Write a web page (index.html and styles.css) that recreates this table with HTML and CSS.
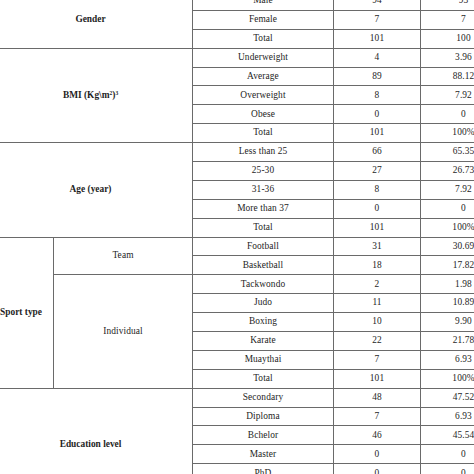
FILE: index.html
```html
<!DOCTYPE html>
<html>
<head>
<meta charset="utf-8">
<link rel="stylesheet" href="styles.css">
</head>
<body>
<table class="data">
  <colgroup>
    <col class="c-a"><col class="c-b"><col class="c-1"><col class="c-2"><col class="c-3">
  </colgroup>
  <tbody>
    <tr><td class="lab" colspan="2" rowspan="3">Gender</td><td>Male</td><td>94</td><td>93</td></tr>
    <tr><td>Female</td><td>7</td><td>7</td></tr>
    <tr><td>Total</td><td>101</td><td>100</td></tr>

    <tr><td class="lab" colspan="2" rowspan="5">BMI (Kg\m<sup>2</sup>)<sup>3</sup></td><td>Underweight</td><td>4</td><td>3.96</td></tr>
    <tr><td>Average</td><td>89</td><td>88.12</td></tr>
    <tr><td>Overweight</td><td>8</td><td>7.92</td></tr>
    <tr><td>Obese</td><td>0</td><td>0</td></tr>
    <tr><td>Total</td><td>101</td><td>100%</td></tr>

    <tr><td class="lab" colspan="2" rowspan="5">Age (year)</td><td>Less than 25</td><td>66</td><td>65.35</td></tr>
    <tr><td>25-30</td><td>27</td><td>26.73</td></tr>
    <tr><td>31-36</td><td>8</td><td>7.92</td></tr>
    <tr><td>More than 37</td><td>0</td><td>0</td></tr>
    <tr><td>Total</td><td>101</td><td>100%</td></tr>

    <tr><td class="lab" rowspan="8">Sport type</td><td class="sub" rowspan="2">Team</td><td>Football</td><td>31</td><td>30.69</td></tr>
    <tr><td>Basketball</td><td>18</td><td>17.82</td></tr>
    <tr><td class="sub" rowspan="6">Individual</td><td>Tackwondo</td><td>2</td><td>1.98</td></tr>
    <tr><td>Judo</td><td>11</td><td>10.89</td></tr>
    <tr><td>Boxing</td><td>10</td><td>9.90</td></tr>
    <tr><td>Karate</td><td>22</td><td>21.78</td></tr>
    <tr><td>Muaythai</td><td>7</td><td>6.93</td></tr>
    <tr><td>Total</td><td>101</td><td>100%</td></tr>

    <tr><td class="lab" colspan="2" rowspan="6">Education level</td><td>Secondary</td><td>48</td><td>47.52</td></tr>
    <tr><td>Diploma</td><td>7</td><td>6.93</td></tr>
    <tr><td>Bchelor</td><td>46</td><td>45.54</td></tr>
    <tr><td>Master</td><td>0</td><td>0</td></tr>
    <tr><td>PhD</td><td>0</td><td>0</td></tr>
    <tr><td>Total</td><td>101</td><td>100%</td></tr>
  </tbody>
</table>
</body>
</html>
```
FILE: styles.css
```css
html, body {
  margin: 0;
  padding: 0;
  background: #ffffff;
  overflow: hidden;
}
.data {
  border-collapse: collapse;
  table-layout: fixed;
  width: 518px;
  margin-left: -12px;
  margin-top: -9px;
  font-family: "Liberation Serif", "Times New Roman", serif;
  font-size: 9.4px;
  color: #1e1e1e;
}
.c-a { width: 65px; }
.c-b { width: 139px; }
.c-1 { width: 141px; }
.c-2 { width: 87px; }
.c-3 { width: 86px; }
.data td {
  border: 1px solid #6a6a6a;
  height: 17.9px;
  padding: 0;
  text-align: center;
  vertical-align: middle;
  white-space: nowrap;
  line-height: 1;
  letter-spacing: 0.1px;
}
.data td.lab {
  font-weight: bold;
  letter-spacing: 0;
}
.data sup {
  font-size: 5.5px;
  vertical-align: 3.5px;
  line-height: 0;
}
```
